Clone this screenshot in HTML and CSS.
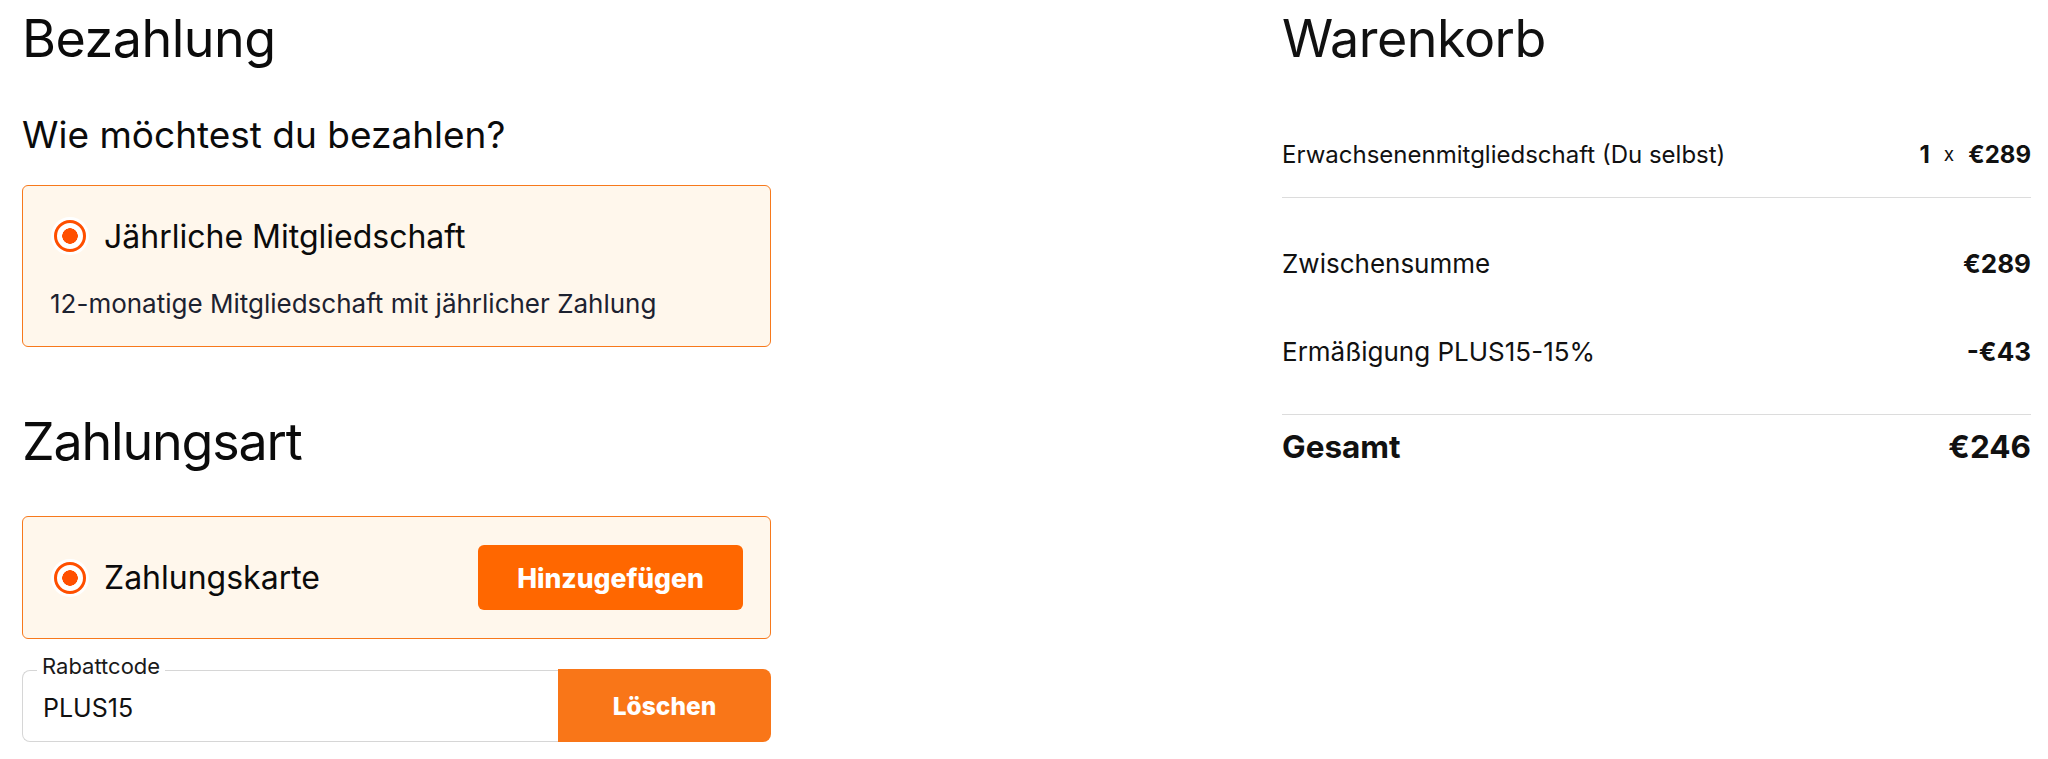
FILE: index.html
```html
<!DOCTYPE html>
<html lang="de">
  <head>
    <meta charset="UTF-8" />
    <meta name="viewport" content="width=device-width, initial-scale=1.0" />
    <title>Bezahlung</title>
    <link rel="stylesheet" href="styles.css">
  </head>
  <body>
    <div class="page">
      <section class="payment">
        <h1>Bezahlung</h1>
        <h2>Wie möchtest du bezahlen?</h2>

        <div class="option">
          <div class="option-head">
            <span class="radio"></span>
            <span class="option-title">Jährliche Mitgliedschaft</span>
          </div>
          <p class="option-desc">12-monatige Mitgliedschaft mit jährlicher Zahlung</p>
        </div>

        <h1 class="method-title">Zahlungsart</h1>

        <div class="option option-card">
          <div class="option-head">
            <span class="radio"></span>
            <span class="option-title">Zahlungskarte</span>
          </div>
          <button class="add-btn" type="button">Hinzugefügen</button>
        </div>

        <form class="coupon">
          <fieldset>
            <legend>Rabattcode</legend>
            <input type="text" value="PLUS15" />
          </fieldset>
          <button class="clear-btn" type="button">Löschen</button>
        </form>
      </section>

      <section class="cart">
        <h1>Warenkorb</h1>

        <div class="cart-item">
          <span>Erwachsenenmitgliedschaft (Du selbst)</span>
          <span class="qty"><b>1</b><small>x</small><b>€289</b></span>
        </div>

        <div class="summary">
          <div class="row">
            <span>Zwischensumme</span>
            <b>€289</b>
          </div>
          <div class="row">
            <span>Ermäßigung PLUS15-15%</span>
            <b>-€43</b>
          </div>
        </div>

        <div class="row total">
          <span>Gesamt</span>
          <span>€246</span>
        </div>
      </section>
    </div>
  </body>
</html>
```

FILE: styles.css
```css
body {
  margin: 0;
  background: #fff;
  color: #0b0b0b;
  font-family: Inter, "Noto Sans", sans-serif;
}
.page {
  display: grid;
  grid-template-columns: 749px 749px;
  justify-content: space-between;
  padding: 9px 17px 0 22px;
}
h1 {
  margin: 0;
  font-size: 52px;
  line-height: 60px;
  font-weight: 400;
  letter-spacing: -0.5px;
}
.method-title {
  margin-top: 65px;
  letter-spacing: -1.2px;
}
h2 {
  margin: 44px 0 28px;
  font-size: 37px;
  line-height: 44px;
  font-weight: 400;
}
.option {
  background: #fff7ec;
  border: 1px solid #f7791c;
  border-radius: 6px;
  padding: 28px 28px 26px 27px;
}
.option-head {
  display: flex;
  align-items: center;
  gap: 18px;
  height: 44px;
}
.radio {
  width: 32px;
  height: 32px;
  box-sizing: border-box;
  margin-left: 4px;
  border: 3px solid #ff4f00;
  border-radius: 50%;
  background: radial-gradient(circle, #ff4f00 0 7.5px, #fff 8px);
  box-shadow: 0 0 0 3px #fff;
}
.option-title {
  font-size: 32px;
}
.option-desc {
  margin: 30px 0 0;
  font-size: 26px;
  line-height: 32px;
  color: #1d2230;
}
.option-card {
  display: flex;
  align-items: center;
  justify-content: space-between;
  margin-top: 44px;
  padding: 28px 27px 28px 27px;
}
.add-btn {
  width: 265px;
  height: 65px;
  background: #ff6700;
  color: #fff;
  border: none;
  border-radius: 6px;
  font-family: Inter, sans-serif;
  font-size: 26.5px;
  font-weight: 800;
  cursor: pointer;
}
.coupon {
  display: flex;
  align-items: flex-end;
  margin-top: 15px;
}
fieldset {
  flex: 1;
  margin: 0;
  padding: 0 16px 12px 14px;
  border: 1px solid #d6d6d6;
  border-right: none;
  border-radius: 8px 0 0 8px;
  background: #fff;
}
legend {
  padding: 0 5px 8px;
  font-size: 22px;
  line-height: 24px;
  color: #1a1a1a;
}
fieldset input {
  display: block;
  width: 100%;
  height: 43px;
  box-sizing: border-box;
  padding: 0 6px;
  border: none;
  outline: none;
  background: transparent;
  font-family: Inter, sans-serif;
  font-size: 25px;
  color: #111;
}
.clear-btn {
  width: 213px;
  height: 73px;
  background: #f97618;
  color: #fff;
  border: none;
  border-radius: 0 8px 8px 0;
  font-family: Inter, sans-serif;
  font-size: 24.5px;
  font-weight: 800;
  cursor: pointer;
}
.cart {
  font-size: 24px;
  color: #111;
}
.cart-item,
.row {
  display: flex;
  justify-content: space-between;
  align-items: center;
  line-height: 32px;
}
.cart-item {
  margin-top: 70px;
  padding-bottom: 26px;
  border-bottom: 1px solid #dcdcdc;
}
.qty {
  display: flex;
  align-items: center;
  gap: 14px;
}
.qty small {
  font-size: 19px;
}
.summary {
  display: flex;
  flex-direction: column;
  gap: 56px;
  padding: 50px 0 46px;
  border-bottom: 1px solid #dcdcdc;
  font-size: 26px;
}
.total {
  padding-top: 14px;
  font-size: 31.5px;
  line-height: 36px;
  font-weight: 700;
}
```
